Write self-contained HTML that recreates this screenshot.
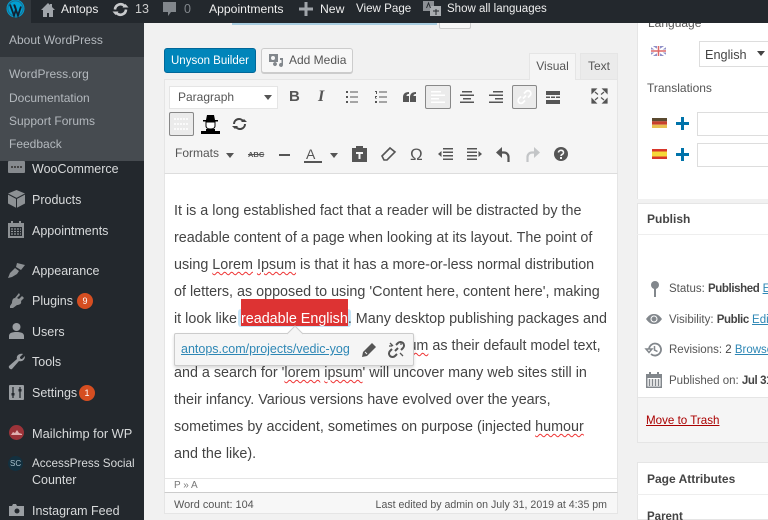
<!DOCTYPE html>
<html><head><meta charset="utf-8"><style>
html,body{margin:0;padding:0;width:768px;height:520px;overflow:hidden;background:#f1f1f1}
#p{position:absolute;left:0;top:0;width:768px;height:520px;overflow:hidden;filter:blur(.35px);font-family:"Liberation Sans",sans-serif;font-size:13px;color:#444}
.a{position:absolute}
.t{position:absolute;white-space:nowrap;line-height:16px}
.w{color:#eee;font-size:12.2px}
.s{color:#d8dadb;font-size:12.5px}
.f{color:#b4b9be;font-size:12.5px}
.l{position:absolute;left:174px;white-space:nowrap;font-size:14.35px;line-height:20px;color:#444}
.sp{text-decoration:underline wavy #e33;text-decoration-thickness:1px;text-underline-offset:2px}
svg{position:absolute;overflow:visible}
a{color:#0073aa;text-decoration:underline}
.m{font-size:11.5px;color:#555}
.m b{color:#444;letter-spacing:-.4px}
</style></head><body><div id="p">

<!-- top of page fragments -->
<div class="a" style="left:232px;top:23px;width:205px;height:2px;background:#a9cde0"></div>
<div class="a" style="left:439px;top:23px;width:32px;height:6px;background:#f7f7f7;border:1px solid #ccc;border-top:0;box-sizing:border-box;border-radius:0 0 2px 2px"></div>

<!-- right: language box -->
<div class="a" style="left:637px;top:23px;width:131px;height:176px;background:#fff;border-left:1px solid #e5e5e5;box-sizing:border-box"></div>
<div class="t" style="left:648px;top:15px;font-size:12px;color:#555">Language</div>

<!-- sidebar -->
<div class="a" style="left:0;top:23px;width:144px;height:497px;background:#23282d"></div>
<!-- admin bar -->
<div class="a" style="left:0;top:0;width:768px;height:23px;background:#23282d"></div>
<div class="a" style="left:0;top:0;width:31px;height:23px;background:#32373c"></div>
<svg style="left:6px;top:0" width="19" height="19" viewBox="0 0 19 19"><circle cx="9.5" cy="8.5" r="9" fill="#00a0d2"/><circle cx="9.5" cy="8.5" r="7.6" fill="none" stroke="#1b6f94" stroke-width="1"/><path d="M4 4.5L8 15.5L10 9.5L8.5 5M8 4.5L12 15.5L15 6.5" fill="none" stroke="#123" stroke-width="1.8"/></svg>
<svg style="left:40px;top:2px" width="16" height="16" viewBox="0 0 16 16"><path d="M8 1L1 8h2v7h4v-4h2v4h4V8h2l-3-3V2h-2v1z" fill="#a0a5aa"/></svg>
<div class="t w" style="left:61px;top:1px;font-size:12px">Antops</div>
<svg style="left:112px;top:1px" width="17" height="17" viewBox="0 0 17 17"><path d="M3 8.500a5.500 5.500 0 0 1 9.500-3.500" fill="none" stroke="#c8cacc" stroke-width="2.600"/><path d="M14 8.500a5.500 5.500 0 0 1-9.500 3.500" fill="none" stroke="#c8cacc" stroke-width="2.600"/><path d="M10.500 6.500h6l-3-3.500zM6.500 10.500h-6l3 3.500z" fill="#c8cacc"/></svg>
<div class="t" style="left:135px;top:1px;color:#ccc;font-size:12.5px">13</div>
<svg style="left:163px;top:2px" width="14" height="15" viewBox="0 0 14 15"><path d="M0 0h13v10H8l-3 4v-4H0z" fill="#82878c"/></svg>
<div class="t" style="left:184px;top:1px;color:#82878c;font-size:12.5px">0</div>
<div class="t w" style="left:209px;top:1px">Appointments</div>
<svg style="left:299px;top:2px" width="14" height="14" viewBox="0 0 14 14"><path d="M5.500 0h3v5.500H14v3H8.500V14h-3V8.500H0v-3h5.500z" fill="#a0a5aa"/></svg>
<div class="t w" style="left:320px;top:1px">New</div>
<div class="t w" style="left:356px;top:1px;font-size:11.600px">View Page</div>
<svg style="left:423px;top:1px" width="19" height="16" viewBox="0 0 19 16"><rect x="0" y="0" width="11" height="10" fill="#8c9095"/><rect x="7" y="5" width="11" height="10" fill="#a8acb0"/><path d="M3.500 7l2-5 2 5M10 10h6M13 8v6" stroke="#23282d" stroke-width="1" fill="none"/></svg>
<div class="t w" style="left:447px;top:1px;font-size:11.500px">Show all languages</div>

<!-- flyout -->
<div class="a" style="left:0;top:23px;width:144px;height:34px;background:#32373c"></div>
<div class="a" style="left:0;top:57px;width:144px;height:104px;background:#464b50"></div>
<div class="t f" style="left:9px;top:32px;font-size:12px">About WordPress</div>
<div class="t f" style="left:9px;top:66px;font-size:12px">WordPress.org</div>
<div class="t f" style="left:9px;top:90px;font-size:12px">Documentation</div>
<div class="t f" style="left:9px;top:113px;font-size:12px">Support Forums</div>
<div class="t f" style="left:9px;top:136px;font-size:12px">Feedback</div>

<!-- menu -->
<svg style="left:8px;top:161px" width="17" height="16" viewBox="0 0 17 16"><rect x="0" y="0" width="17" height="12" rx="1" fill="#868a8e"/><path d="M3 6h11" stroke="#444" stroke-width="2" stroke-dasharray="2 1"/></svg>
<div class="t s" style="left:32px;top:161px">WooCommerce</div>
<svg style="left:8px;top:190px" width="17" height="18" viewBox="0 0 17 18"><path d="M8.500 0L17 3.500v10L8.500 18 0 13.500v-10z" fill="#8d9194"/><path d="M0 4l8.500 4.500L17 4M8.500 8.500V18" stroke="#23282d" stroke-width="1" fill="none"/></svg>
<div class="t s" style="left:32px;top:192px">Products</div>
<svg style="left:8px;top:221px" width="16" height="17" viewBox="0 0 16 17"><path d="M0 2h3V0h2v2h6V0h2v2h3v15H0z" fill="#8d9194"/><path d="M2 6h12v9H2z" fill="#23282d"/><path d="M3 8h10M3 10.500h10M3 13h10" stroke="#8d9194" stroke-width="1.300" stroke-dasharray="2 1"/></svg>
<div class="t s" style="left:32px;top:223px">Appointments</div>
<svg style="left:8px;top:262px" width="17" height="16" viewBox="0 0 17 16"><path d="M9 1l8 2-4 5-5-3zM7 6l4 3-2 3-5 3-4 1 2-5z" fill="#8d9194"/></svg>
<div class="t s" style="left:32px;top:263px">Appearance</div>
<svg style="left:9px;top:293px" width="15" height="15" viewBox="0 0 15 15"><path d="M10 0l1 2-3 3 2 1 3-3 2 2-3 3c1 3-2 4-4 4l-4 3-3 0 0-2 2-3c0-3 1-5 3-5z" fill="#8d9194"/></svg>
<div class="t s" style="left:32px;top:293px">Plugins</div>
<div class="a" style="left:77px;top:293px;width:16px;height:16px;border-radius:50%;background:#d54e21;color:#fff;font-size:9px;line-height:16px;text-align:center">9</div>
<svg style="left:9px;top:323px" width="15" height="16" viewBox="0 0 15 16"><circle cx="7.500" cy="4" r="4" fill="#9a9ea2"/><path d="M0 16v-3c0-3 3-4 7.500-4s7.500 1 7.500 4v3z" fill="#9a9ea2"/></svg>
<div class="t s" style="left:32px;top:324px">Users</div>
<svg style="left:8px;top:353px" width="17" height="17" viewBox="0 0 17 17"><path d="M15 1l-3 3 0 1 1 1 1 0 3-3c0 4-3 6-6 5l-7 8c-1 1-4-1-3-3l8-7c-1-3 2-6 6-5z" fill="#9a9ea2"/></svg>
<div class="t s" style="left:32px;top:354px">Tools</div>
<svg style="left:9px;top:385px" width="15" height="15" viewBox="0 0 15 15"><rect width="15" height="15" rx="1" fill="#9a9ea2"/><path d="M4 2v11M11 2v11" stroke="#23282d" stroke-width="1.300"/><rect x="2.500" y="8" width="3" height="2.500" fill="#23282d"/><rect x="9.500" y="4" width="3" height="2.500" fill="#23282d"/></svg>
<div class="t s" style="left:32px;top:385px">Settings</div>
<div class="a" style="left:79px;top:385px;width:16px;height:16px;border-radius:50%;background:#d54e21;color:#fff;font-size:9px;line-height:16px;text-align:center">1</div>
<svg style="left:9px;top:425px" width="15" height="15" viewBox="0 0 15 15"><circle cx="7.500" cy="7.500" r="7.500" fill="#9c3339"/><path d="M2 10l2-3 2 1 2-3 2 3 3 1v1z" fill="#e0b0b0"/></svg>
<div class="t s" style="left:32px;top:426px;font-size:12.8px">Mailchimp for WP</div>
<div class="a" style="left:8px;top:456px;width:15px;height:15px;border-radius:50%;background:#13303f"></div>
<div class="t" style="left:10px;top:456px;color:#a8c0cc;font-size:8px">SC</div>
<div class="t s" style="left:32px;top:456px;font-size:11.7px">AccessPress Social</div>
<div class="t s" style="left:32px;top:472px">Counter</div>
<svg style="left:9px;top:504px" width="15" height="13" viewBox="0 0 15 13"><path d="M0 2h3l1-2h3l1 2h7v10H0z" fill="#9a9ea2"/><circle cx="8" cy="7" r="2.500" fill="#23282d"/></svg>
<div class="t s" style="left:32px;top:503px">Instagram Feed</div>

<!-- buttons -->
<div class="a" style="left:164px;top:48px;width:92px;height:25px;background:#0085ba;border:1px solid #006799;box-sizing:border-box;border-radius:3px;color:#fff;font-size:11.5px;line-height:24px;text-align:center">Unyson Builder</div>
<div class="a" style="left:261px;top:48px;width:92px;height:25px;background:#f7f7f7;border:1px solid #ccc;box-sizing:border-box;border-radius:3px;box-shadow:0 1px 0 #ccc;color:#555;font-size:12px;line-height:23px;padding-left:27px">Add Media</div>
<svg style="left:268px;top:53px" width="16" height="15" viewBox="0 0 16 15"><path d="M1 1h9v8H1z" fill="#82878c"/><circle cx="5" cy="5" r="2" fill="#f7f7f7"/><path d="M12 5h3v7a2 2 0 1 1-1.500-2V7H12M5 11a2 2 0 1 1 0 .1" fill="#82878c"/></svg>

<!-- tabs -->
<div class="a" style="left:529px;top:53px;width:47px;height:27px;background:#f5f5f5;border:1px solid #e5e5e5;border-bottom:0;box-sizing:border-box;color:#555;font-size:12px;line-height:25px;text-align:center;z-index:2">Visual</div>
<div class="a" style="left:580px;top:53px;width:38px;height:26px;background:#ebebeb;border:1px solid #e5e5e5;border-bottom:0;box-sizing:border-box;color:#555;font-size:12px;line-height:25px;text-align:center">Text</div>

<!-- editor -->
<div class="a" style="left:164px;top:79px;width:454px;height:95px;background:#f5f5f5;border:1px solid #e5e5e5;border-bottom:1px solid #ddd;box-sizing:border-box"></div>
<div class="a" style="left:164px;top:174px;width:454px;height:305px;background:#fff;border-left:1px solid #e5e5e5;border-right:1px solid #e5e5e5;box-sizing:border-box"></div>
<div class="a" style="left:164px;top:478px;width:454px;height:15px;background:#fff;border:1px solid #e5e5e5;border-bottom:1px solid #ccc;box-sizing:border-box;color:#777;font-size:10px;line-height:14px;padding-left:9px">P » A</div>
<div class="a" style="left:164px;top:493px;width:454px;height:21px;background:#f7f7f7;border:1px solid #e5e5e5;border-top:0;box-sizing:border-box"></div>
<div class="t" style="left:174px;top:497px;font-size:10.9px;color:#555">Word count: 104</div>
<div class="t" style="right:161px;top:497px;font-size:10.6px;color:#555">Last edited by admin on July 31, 2019 at 4:35 pm</div>

<!-- toolbar row 1 -->
<div class="a" style="left:169px;top:86px;width:109px;height:23px;background:#fff;border:1px solid #e5e5e5;box-sizing:border-box;color:#555;font-size:12px;line-height:20px;padding-left:8px">Paragraph</div>
<div class="a" style="left:264px;top:95px;border:4px solid transparent;border-top:5px solid #555"></div>
<div class="t" style="left:289px;top:89px;font-weight:bold;font-size:15px;color:#555">B</div>
<div class="t" style="left:318px;top:89px;font-weight:bold;font-style:italic;font-family:'Liberation Serif',serif;font-size:16px;color:#555">I</div>
<svg style="left:346px;top:91px" width="12" height="12" viewBox="0 0 12 12"><path d="M0 0h2v2H0zM0 5h2v2H0zM0 10h2v2H0zM4 0.500h8v1H4zM4 5.500h8v1H4zM4 10.500h8v1H4z" fill="#555"/></svg>
<svg style="left:375px;top:91px" width="12" height="12" viewBox="0 0 12 12"><path d="M0 0h2v3H1V1H0zM0 5h2v1H1v1h1v.500H0zM0 10h2v2H0zM4 0.500h8v1H4zM4 5.500h8v1H4zM4 10.500h8v1H4z" fill="#555"/></svg>
<svg style="left:403px;top:92px" width="13" height="10" viewBox="0 0 13 10"><path d="M6 0v2C4 2 3.500 3 3.500 4H6v6H0V5C0 2 2 0 6 0zM13 0v2c-2 0-2.500 1-2.500 2H13v6H7V5C7 2 9 0 13 0z" fill="#555"/></svg>
<div class="a" style="left:425px;top:85px;width:26px;height:24px;background:#ebebeb;border:1px solid #888;box-sizing:border-box;border-radius:2px"></div>
<svg style="left:431px;top:91px" width="14" height="12" viewBox="0 0 14 12"><path d="M0 0h10v1.500H0zM0 3.500h14V5H0zM0 7h8v1.500H0zM0 10.500h14V12H0z" fill="#fff"/></svg>
<svg style="left:460px;top:91px" width="14" height="13" viewBox="0 0 14 13"><path d="M2 0h10v1.500H2zM0 3.500h14V5H0zM3 7h8v1.500H3zM0 10.500h14V12H0z" fill="#555"/></svg>
<svg style="left:489px;top:91px" width="14" height="13" viewBox="0 0 14 13"><path d="M4 0h10v1.500H4zM0 3.500h14V5H0zM6 7h8v1.500H6zM0 10.500h14V12H0z" fill="#555"/></svg>
<div class="a" style="left:512px;top:85px;width:25px;height:24px;background:#ebebeb;border:1px solid #888;box-sizing:border-box;border-radius:2px"></div>
<svg style="left:517px;top:90px" width="15" height="14" viewBox="0 0 15 14"><path d="M6 8.500l3-3M7 3.500l2-2a2.500 2.500 0 0 1 4 4l-2 2M8 10.500l-2 2a2.500 2.500 0 0 1-4-4l2-2" fill="none" stroke="#fff" stroke-width="1.800"/></svg>
<svg style="left:546px;top:91px" width="14" height="13" viewBox="0 0 14 13"><path d="M0 0h14v4H0zM0 5.500h4v1.500H0zM5 5.500h4v1.500H5zM10 5.500h4v1.500h-4zM0 9h14v4H0z" fill="#555"/></svg>
<svg style="left:592px;top:89px" width="15" height="14" viewBox="0 0 15 14"><path d="M0 0h4L0 4zM15 0h-4l4 4zM0 14h4L0 10zM15 14h-4l4-4zM3 3l3 2.500M12 3L9 5.500M3 11l3-2.500M12 11L9 8.500" fill="#555" stroke="#555" stroke-width="1.200"/></svg>

<!-- row 2 -->
<div class="a" style="left:169px;top:112px;width:25px;height:24px;background:#ebebeb;border:1px solid #888;box-sizing:border-box;border-radius:2px"></div>
<svg style="left:173px;top:117px" width="17" height="14" viewBox="0 0 17 14"><path d="M1 2h15M1 7h15M1 12h15" stroke="#fff" stroke-width="1.500" stroke-dasharray="2 1"/></svg>
<svg style="left:201px;top:115px" width="19" height="19" viewBox="0 0 19 19"><path d="M6 0h7l1 5h3v1.500H2V5h3z" fill="#000"/><path d="M5 7h9v4c0 2-2 3-4.500 3S5 13 5 11z" fill="#fff" stroke="#000" stroke-width="1"/><path d="M5 14h9v2h5v3H0v-3h5z" fill="#000"/></svg>
<svg style="left:232px;top:117px" width="15" height="14" viewBox="0 0 15 14"><path d="M2 7a5 5 0 0 1 9-3M13 7a5 5 0 0 1-9 3" fill="none" stroke="#444" stroke-width="2"/><path d="M9 5h6l-3-3zM6 9H0l3 3z" fill="#444"/></svg>

<!-- row 3 -->
<div class="t" style="left:175px;top:145px;font-size:12px;color:#555">Formats</div>
<div class="a" style="left:226px;top:153px;border:4px solid transparent;border-top:5px solid #555"></div>
<div class="t" style="left:248px;top:147px;font-size:7.500px;color:#555;font-weight:bold;text-decoration:line-through">ABC</div>
<div class="a" style="left:279px;top:154px;width:11px;height:2px;background:#555"></div>
<div class="t" style="left:306px;top:146px;font-size:14px;color:#555">A</div>
<div class="a" style="left:304px;top:161px;width:18px;height:2px;background:#555"></div>
<div class="a" style="left:330px;top:153px;border:4px solid transparent;border-top:5px solid #555"></div>
<svg style="left:352px;top:146px" width="15" height="16" viewBox="0 0 15 16"><path d="M0 2h4V0h7v2h4v14H0z" fill="#555"/><path d="M4 6h7v2H8.500v5h-2V8H4z" fill="#f5f5f5"/></svg>
<svg style="left:381px;top:147px" width="15" height="14" viewBox="0 0 15 14"><path d="M1 9l8-8 5 4-8 8H3z" fill="none" stroke="#555" stroke-width="1.600"/></svg>
<div class="t" style="left:410px;top:147px;font-size:17px;color:#555">Ω</div>
<svg style="left:438px;top:148px" width="15" height="12" viewBox="0 0 15 12"><path d="M5 0h10v1.500H5zM5 3.500h10V5H5zM5 7h10v1.500H5zM5 10.500h10V12H5z" fill="#555"/><path d="M0 6l3.500-3v6z" fill="#555"/></svg>
<svg style="left:467px;top:148px" width="15" height="12" viewBox="0 0 15 12"><path d="M0 0h10v1.500H0zM0 3.500h10V5H0zM0 7h10v1.500H0zM0 10.500h10V12H0z" fill="#555"/><path d="M15 6l-3.500-3v6z" fill="#555"/></svg>
<svg style="left:496px;top:147px" width="15" height="15" viewBox="0 0 15 15"><path d="M4 5.500h4a4.500 4.500 0 0 1 4.500 4.500v5" fill="none" stroke="#555" stroke-width="2.200"/><path d="M6 0v11L0 5.500z" fill="#555"/></svg>
<svg style="left:525px;top:147px" width="15" height="15" viewBox="0 0 15 15"><path d="M11 5.500H7A4.500 4.500 0 0 0 2.500 10v5" fill="none" stroke="#c3c5c7" stroke-width="2.200"/><path d="M9 0v11l6-5.500z" fill="#c3c5c7"/></svg>
<svg style="left:554px;top:147px" width="14" height="14" viewBox="0 0 14 14"><circle cx="7" cy="7" r="7" fill="#555"/><path d="M4.500 5.500a2.500 2.200 0 1 1 3.500 2c-.7.400-1 .7-1 1.500" fill="none" stroke="#f5f5f5" stroke-width="1.600"/><rect x="6" y="10" width="2" height="2" fill="#f5f5f5"/></svg>

<!-- content -->
<div class="l" style="top:201px">It is a long established fact that a reader will be distracted by the</div>
<div class="l" style="top:228px">readable content of a page when looking at its layout. The point of</div>
<div class="l" style="top:255px">using <span class="sp">Lorem</span> <span class="sp">Ipsum</span> is that it has a more-or-less normal distribution</div>
<div class="l" style="top:282px">of letters, as opposed to using 'Content here, content here', making</div>
<div class="a" style="left:238px;top:309px;width:113px;height:18px;background:#c6e5f7;border-radius:3px"></div>
<div class="a" style="left:241px;top:299px;width:107px;height:27px;background:#dd3333"></div>
<div class="l" style="top:309px">it look like <span style="color:#fff">readable English</span>. Many desktop publishing packages and</div>
<div class="l" style="top:336px">web page editors now use <span class="sp">Lorem</span> <span class="sp">Ipsum</span> as their default model text,</div>
<div class="l" style="top:363px">and a search for '<span class="sp">lorem</span> <span class="sp">ipsum</span>' will uncover many web sites still in</div>
<div class="l" style="top:390px">their infancy. Various versions have evolved over the years,</div>
<div class="l" style="top:417px">sometimes by accident, sometimes on purpose (injected <span class="sp">humour</span></div>
<div class="l" style="top:444px">and the like).</div>

<!-- link popup -->
<div class="a" style="left:174px;top:333px;width:240px;height:33px;background:#f5f5f5;border:1px solid #ccc;box-sizing:border-box;border-radius:2px;box-shadow:0 2px 3px rgba(0,0,0,.15)"></div>
<svg style="left:287px;top:326px" width="16" height="8" viewBox="0 0 16 8"><path d="M0 8L8 0l8 8" fill="#f5f5f5" stroke="#ccc"/></svg>
<div class="t" style="left:181px;top:341px;font-size:12.500px;color:#2e87b5;text-decoration:underline">antops.com/projects/vedic-yog</div>
<svg style="left:362px;top:343px" width="14" height="14" viewBox="0 0 14 14"><path d="M10 0l4 4-9 9-5 1 1-5z" fill="#555"/><path d="M3 9l2 2" stroke="#f5f5f5"/></svg>
<svg style="left:388px;top:341px" width="17" height="17" viewBox="0 0 17 17"><path d="M7 10l3-3M8 4l2-2a3 3 0 0 1 5 5l-2 2M9 13l-2 2a3 3 0 0 1-5-5l2-2" fill="none" stroke="#555" stroke-width="2"/><path d="M2 2l3 3M15 15l-3-3M1 5h3M13 1v3" stroke="#555" stroke-width="1.300"/></svg>

<!-- language box content -->
<svg style="left:651px;top:46px" width="15" height="10" viewBox="0 0 15 10"><rect width="15" height="10" fill="#8f8fc8"/><path d="M0 0l15 10M15 0L0 10" stroke="#fff" stroke-width="2"/><path d="M7.500 0v10M0 5h15" stroke="#fff" stroke-width="3"/><path d="M7.500 0v10M0 5h15" stroke="#d66" stroke-width="1.500"/></svg>
<div class="a" style="left:699px;top:41px;width:69px;height:26px;background:#fff;border:1px solid #ddd;border-right:0;box-sizing:border-box;color:#444;font-size:12.7px;line-height:26px;padding-left:5px">English</div>
<div class="a" style="left:757px;top:51px;border:4px solid transparent;border-top:5px solid #444"></div>
<div class="t" style="left:647px;top:80px;font-size:12px;color:#555">Translations</div>
<svg style="left:652px;top:118px" width="15" height="10" viewBox="0 0 15 10"><rect width="15" height="3.300" fill="#5a4a30"/><rect y="3.300" width="15" height="3.400" fill="#c8402c"/><rect y="6.700" width="15" height="3.300" fill="#e8c050"/></svg>
<svg style="left:676px;top:117px" width="13" height="13" viewBox="0 0 13 13"><path d="M5 0h3v5h5v3H8v5H5V8H0V5h5z" fill="#0073aa"/></svg>
<div class="a" style="left:697px;top:112px;width:71px;height:24px;background:#fff;border:1px solid #ddd;border-right:0;box-sizing:border-box"></div>
<svg style="left:652px;top:149px" width="15" height="10" viewBox="0 0 15 10"><rect width="15" height="10" fill="#d8362a"/><rect y="2.500" width="15" height="5" fill="#f5d93a"/></svg>
<svg style="left:676px;top:148px" width="13" height="13" viewBox="0 0 13 13"><path d="M5 0h3v5h5v3H8v5H5V8H0V5h5z" fill="#0073aa"/></svg>
<div class="a" style="left:697px;top:143px;width:71px;height:24px;background:#fff;border:1px solid #ddd;border-right:0;box-sizing:border-box"></div>

<!-- publish box -->
<div class="a" style="left:637px;top:203px;width:131px;height:240px;background:#fff;border:1px solid #e5e5e5;border-right:0;box-sizing:border-box"></div>
<div class="a" style="left:637px;top:234px;width:131px;height:1px;background:#eee"></div>
<div class="t" style="left:647px;top:211px;font-size:12px;color:#444;font-weight:bold">Publish</div>
<svg style="left:650px;top:281px" width="10" height="16" viewBox="0 0 10 16"><circle cx="5" cy="4" r="4" fill="#82878c"/><rect x="4" y="7" width="2" height="9" fill="#82878c"/></svg>
<div class="t m" style="left:669px;top:281px">Status: <b>Published</b> <a href="#" style="color:#2e87b5">Edit</a></div>
<svg style="left:646px;top:313px" width="16" height="12" viewBox="0 0 16 12"><path d="M0 6c3-4 5-5 8-5s5 1 8 5c-3 4-5 5-8 5S3 10 0 6z" fill="#82878c"/><circle cx="8" cy="6" r="3" fill="#82878c" stroke="#fff"/></svg>
<div class="t m" style="left:669px;top:312px">Visibility: <b>Public</b> <a href="#" style="color:#2e87b5">Edit</a></div>
<svg style="left:646px;top:342px" width="16" height="15" viewBox="0 0 16 15"><path d="M3 7.500a6 6 0 1 1 2 4.500" fill="none" stroke="#82878c" stroke-width="1.800"/><path d="M0 7h6l-3 3.500zM8.500 4v4l3 1.500" fill="none" stroke="#82878c" stroke-width="1.500"/></svg>
<div class="t m" style="left:669px;top:342px">Revisions: <span style="color:#444">2</span> <a href="#" style="color:#2e87b5">Browse</a></div>
<svg style="left:646px;top:372px" width="16" height="16" viewBox="0 0 16 16"><path d="M0 2h3V0h2v2h6V0h2v2h3v14H0z" fill="#82878c"/><rect x="1.500" y="6" width="13" height="8.500" fill="#fff"/><path d="M3.500 7v7M6.500 7v7M9.500 7v7M12.500 7v7" stroke="#82878c" stroke-width="1.500"/></svg>
<div class="t m" style="left:669px;top:373px">Published on: <b>Jul 31</b></div>
<div class="a" style="left:637px;top:397px;width:131px;height:46px;background:#f5f5f5;border:1px solid #e5e5e5;border-right:0;box-sizing:border-box"></div>
<div class="t" style="left:646px;top:413px;font-size:11.6px;color:#a00;text-decoration:underline">Move to Trash</div>

<!-- page attributes -->
<div class="a" style="left:637px;top:462px;width:131px;height:58px;background:#fff;border:1px solid #e5e5e5;border-right:0;box-sizing:border-box"></div>
<div class="a" style="left:637px;top:494px;width:131px;height:1px;background:#eee"></div>
<div class="t" style="left:647px;top:471px;font-size:12px;color:#444;font-weight:bold">Page Attributes</div>
<div class="t" style="left:647px;top:509px;font-size:11.5px;color:#444;font-weight:bold">Parent</div>
</div></body></html>
